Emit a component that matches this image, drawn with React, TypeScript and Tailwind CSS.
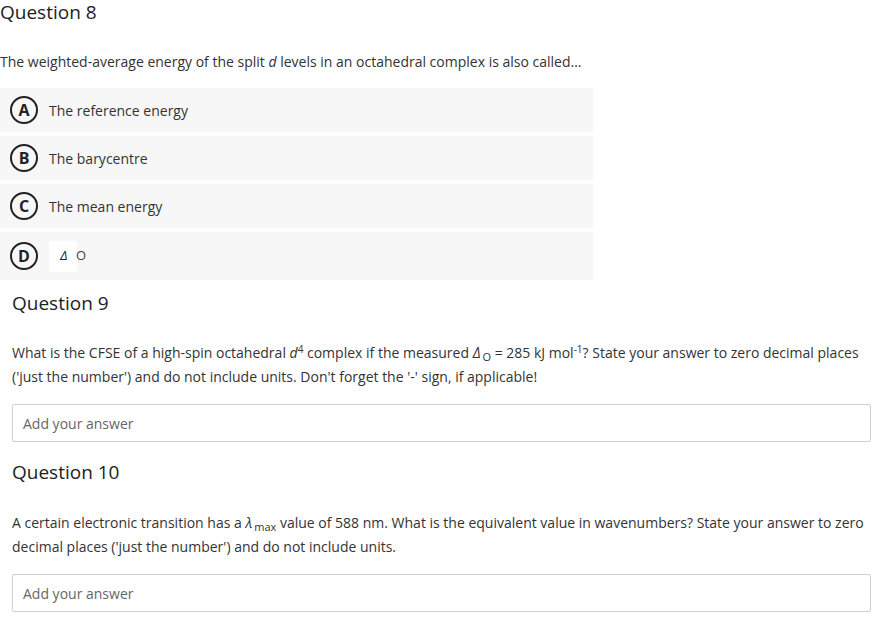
import React from "react";

const font = { fontFamily: '"Open Sans", "Liberation Sans", sans-serif' };

const Letter = ({ l }: { l: string }) => (
  <span className="flex h-[28px] w-[28px] shrink-0 items-center justify-center rounded-full border-2 border-[#222] text-[16px] font-bold leading-none text-[#222]">
    {l}
  </span>
);

const Option = ({ l, children, tall }: { l: string; children: React.ReactNode; tall?: boolean }) => (
  <div className={`flex w-[593px] items-center gap-[11px] bg-[#f7f7f7] pl-[10px] ${tall ? "h-[48px]" : "h-[44px]"}`}>
    <Letter l={l} />
    {children}
  </div>
);

const Answer = () => (
  <div className="flex h-[38px] items-center rounded-[2px] border border-[#cfcfcf] bg-white px-[10px] text-[14px] text-[#666]">
    Add your answer
  </div>
);

export default function App() {
  return (
    <div className="min-h-screen bg-white text-[#333]" style={font}>
      <h2 className="pt-[1px] text-[19px] leading-[22px] text-[#222]">Question 8</h2>
      <p className="mt-[28px] text-[14px] leading-[22px]">
        The weighted-average energy of the split <i>d</i> levels in an octahedral complex is also called...
      </p>
      <div className="mt-[15px] flex flex-col gap-[4px] text-[14px]">
        <Option l="A">The reference energy</Option>
        <Option l="B">The barycentre</Option>
        <Option l="C">The mean energy</Option>
        <Option l="D" tall>
          <span className="flex h-[31px] w-[28px] items-center justify-center bg-white pl-[2px] text-[13px] text-[#222]">
            <i>Δ</i>
          </span>
          <span className="-ml-[12px] text-[13px] text-[#444]">O</span>
        </Option>
      </div>

      <div className="pl-[12px] pr-[7px]">
        <h2 className="mt-[12px] text-[19px] leading-[22px] text-[#222]">Question 9</h2>
        <p className="mt-[27px] text-[14px] leading-[24px]">
          What is the CFSE of a high-spin octahedral <i>d</i>
          <sup className="text-[10px]">4</sup> complex if the measured <i>Δ</i>
          <sub className="ml-[2px] text-[11px]">O</sub> = 285 kJ mol<sup className="text-[10px]">-1</sup>? State
          your answer to zero decimal places ('just the number') and do not include units. Don't forget the '-'
          sign, if applicable!
        </p>
        <div className="mt-[15px]">
          <Answer />
        </div>

        <h2 className="mt-[19px] text-[19px] leading-[22px] text-[#222]">Question 10</h2>
        <p className="mt-[28px] text-[14px] leading-[24px]">
          A certain electronic transition has a <i>λ</i>
          <sub className="ml-[2px] text-[11px]">max</sub> value of 588 nm. What is the equivalent value in
          wavenumbers? State your answer to zero decimal places ('just the number') and do not include units.
        </p>
        <div className="mt-[15px]">
          <Answer />
        </div>
      </div>
    </div>
  );
}
